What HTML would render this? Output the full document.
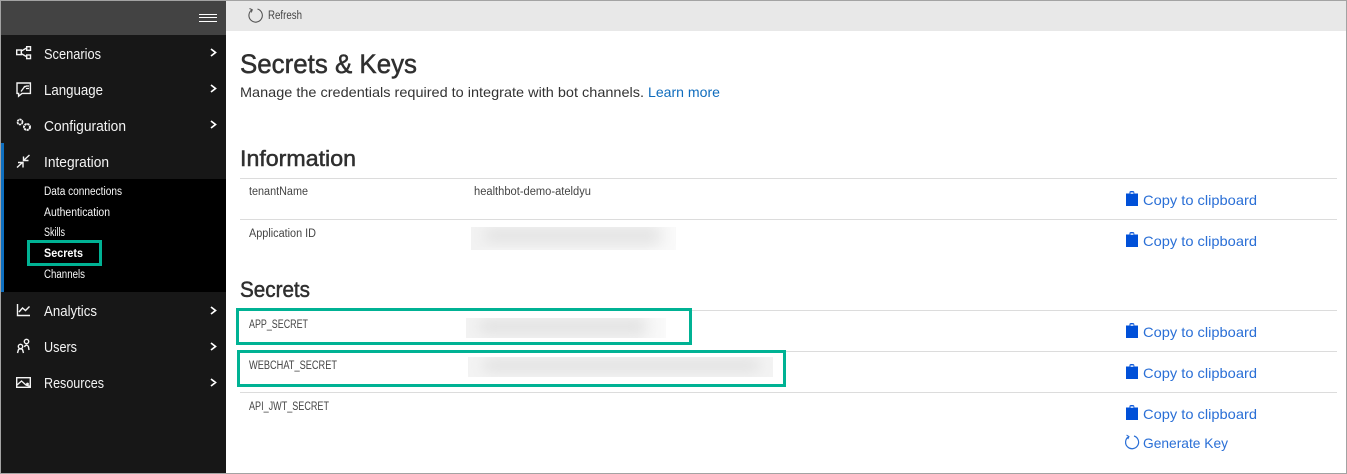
<!DOCTYPE html>
<html><head><meta charset="utf-8"><title>Secrets &amp; Keys</title>
<style>
html,body{margin:0;padding:0;background:#fff;width:1347px;height:474px;overflow:hidden}
svg{display:block}
text{font-family:"Liberation Sans",sans-serif}
.nav{font-size:14.5px;fill:#f4f4f4}
.sub{font-size:11.5px;fill:#f8f8f8}
.lbl{font-size:11.5px;fill:#444}
.lnk{font-size:14px;fill:#2a6fd6}
.h{fill:#2f2f2f;stroke:#2f2f2f;stroke-width:.5}
.ic{fill:none;stroke:#f4f4f4;stroke-width:1.4}
.ch{fill:none;stroke:#fff;stroke-width:1.7}
.ln{stroke:#dcdcdc;stroke-width:1}
.gb{fill:none;stroke:#00b294;stroke-width:3}
</style></head><body>
<svg width="1347" height="474" viewBox="0 0 1347 474" xmlns="http://www.w3.org/2000/svg">
<defs>
<filter id="b" x="-10%" y="-80%" width="120%" height="260%"><feGaussianBlur stdDeviation="7"/></filter>
<clipPath id="c1"><rect x="471" y="227" width="205" height="23"/></clipPath>
<clipPath id="c2"><rect x="466" y="318" width="200" height="20"/></clipPath>
<clipPath id="c3"><rect x="468" y="357" width="305" height="20"/></clipPath>
<linearGradient id="f" x1="0" x2="1" y1="0" y2="0"><stop offset="0" stop-color="#f2f2f2"/><stop offset=".85" stop-color="#f2f2f2"/><stop offset="1" stop-color="#fafafa"/></linearGradient>
<g id="clip"><path d="M0 2.500h3.500V1.200C3.500.4 4.200 0 5.800 0s2.500.4 2.500 1.200v1.300H12V15H0z" fill="#0050d8"/><rect x="4.500" y="1.400" width="3" height="1.400" fill="#fff"/></g>
</defs>
<rect width="1347" height="474" fill="#fff"/>
<rect x="226" y="1" width="1121" height="30" fill="#e8e8e8"/>
<rect x="1" y="1" width="225" height="472" fill="#171717"/>
<rect x="1" y="1" width="225" height="34" fill="#434343"/>
<rect x="1" y="179" width="225" height="113" fill="#000"/>
<rect x="1" y="143" width="3" height="149" fill="#0e6fc0"/>
<path d="M199 14.500h18M199 17.500h18M199 21.500h18" stroke="#fff" stroke-width="1"/>

<text class="nav" x="44" y="59" textLength="57" lengthAdjust="spacingAndGlyphs">Scenarios</text>
<text class="nav" x="44" y="95" textLength="59" lengthAdjust="spacingAndGlyphs">Language</text>
<text class="nav" x="44" y="131" textLength="82" lengthAdjust="spacingAndGlyphs">Configuration</text>
<text class="nav" x="44" y="167" textLength="65" lengthAdjust="spacingAndGlyphs">Integration</text>
<text class="nav" x="44" y="316" textLength="53" lengthAdjust="spacingAndGlyphs">Analytics</text>
<text class="nav" x="44" y="352" textLength="33" lengthAdjust="spacingAndGlyphs">Users</text>
<text class="nav" x="44" y="388" textLength="60" lengthAdjust="spacingAndGlyphs">Resources</text>

<text class="sub" x="44" y="195" textLength="78" lengthAdjust="spacingAndGlyphs">Data connections</text>
<text class="sub" x="44" y="216" textLength="66" lengthAdjust="spacingAndGlyphs">Authentication</text>
<text class="sub" x="44" y="236" textLength="21" lengthAdjust="spacingAndGlyphs">Skills</text>
<text class="sub" x="44" y="257" textLength="39" lengthAdjust="spacingAndGlyphs" font-weight="700" style="fill:#fff">Secrets</text>
<text class="sub" x="44" y="278" textLength="41" lengthAdjust="spacingAndGlyphs">Channels</text>
<rect class="gb" x="28.500" y="241.500" width="72" height="23"/>

<path class="ch" d="M211 49l4.500 3.500-4.500 3.500M211 85l4.500 3.500-4.500 3.500M211 121l4.500 3.500-4.500 3.500M211 307l4.500 3.500-4.500 3.500M211 343l4.500 3.500-4.500 3.500M211 379l4.500 3.500-4.500 3.500"/>

<!-- scenarios -->
<g class="ic"><rect x="16.700" y="50" width="4.600" height="4.600"/><rect x="26.700" y="46.700" width="3.800" height="3.600"/><rect x="26.700" y="55" width="3.800" height="3.600"/><path d="M21.400 51l5.200-3M21.400 53.800l5.200 2.800"/></g>
<!-- language -->
<g class="ic"><path d="M17 83h13.400v10.400H22l-3.400 2.800v-2.800H17z"/><path d="M21 91.500l4-5.500M23.500 87.500l3-1.500M26 86h3M26 88.500h3" stroke-width="1.300"/></g>
<!-- config -->
<g class="ic"><circle cx="20" cy="122" r="2.500" stroke-width="1.700" stroke-dasharray="2.200 .5"/><circle cx="27" cy="127" r="3" stroke-width="2" stroke-dasharray="2.200 .6"/></g>
<!-- integration -->
<g class="ic" stroke-width="1.500"><path d="M29.500 155l-6 5.500M23.500 156.500v4h5M17 167.500l6-5.500M18 162.500h5v5"/></g>
<!-- analytics -->
<g class="ic"><path d="M17.500 304v11.500H30"/><path d="M19 312l3.500-4 3 2.500 4-4"/></g>
<!-- users -->
<g class="ic" stroke-width="1.200"><circle cx="26.500" cy="341.500" r="2.200"/><path d="M24.500 347c.3-1 1.200-1.800 2-1.800s1.800.8 2 1.800l.5 3"/><circle cx="20.500" cy="346.500" r="2.200"/><path d="M17.500 353l1-3.500c.5-.8 3.500-.8 4 0l1 3.500"/></g>
<!-- resources -->
<g class="ic"><rect x="16.700" y="377.700" width="13.600" height="9.600"/><path d="M17 385l4.500-4 4.500 4 4.500 1.500" stroke-width="1.300"/><circle cx="27.500" cy="384" r=".7"/></g>

<!-- toolbar -->
<path d="M252 9.800A6.700 6.700 0 1 0 257.500 9" fill="none" stroke="#555" stroke-width="1.100"/>
<path d="M249.500 8.500l2.800 1.300-1 2.600" fill="none" stroke="#555" stroke-width="1"/>
<text x="268" y="19" font-size="11.500" fill="#444" textLength="34" lengthAdjust="spacingAndGlyphs">Refresh</text>

<text class="h" x="240" y="73" font-size="27" textLength="177" lengthAdjust="spacingAndGlyphs">Secrets &amp; Keys</text>
<text x="240" y="97" font-size="14" fill="#333" textLength="404" lengthAdjust="spacingAndGlyphs">Manage the credentials required to integrate with bot channels.</text>
<text x="648" y="97" font-size="14" fill="#0f6cbd" textLength="72" lengthAdjust="spacingAndGlyphs">Learn more</text>
<text class="h" x="240" y="166" font-size="22" textLength="116" lengthAdjust="spacingAndGlyphs">Information</text>
<text class="h" x="240" y="297" font-size="22" textLength="70" lengthAdjust="spacingAndGlyphs">Secrets</text>

<path class="ln" d="M240 178.500H1337M240 219.500H1337M240 310.500H1337M240 351.500H1337M240 392.500H1337"/>

<text class="lbl" x="249" y="195" textLength="59" lengthAdjust="spacingAndGlyphs">tenantName</text>
<text class="lbl" x="474" y="195" textLength="117" lengthAdjust="spacingAndGlyphs">healthbot-demo-ateldyu</text>
<text class="lbl" x="249" y="237" textLength="67" lengthAdjust="spacingAndGlyphs">Application ID</text>
<text class="lbl" x="249" y="328" textLength="59" lengthAdjust="spacingAndGlyphs">APP_SECRET</text>
<text class="lbl" x="249" y="369" textLength="88" lengthAdjust="spacingAndGlyphs">WEBCHAT_SECRET</text>
<text class="lbl" x="249" y="410" textLength="80" lengthAdjust="spacingAndGlyphs">API_JWT_SECRET</text>

<g clip-path="url(#c1)"><rect x="471" y="227" width="205" height="23" fill="url(#f)"/><rect x="485" y="231" width="175" height="9" fill="#dcdcdc" filter="url(#b)"/></g>
<g clip-path="url(#c2)"><rect x="466" y="318" width="200" height="20" fill="url(#f)"/><rect x="480" y="322" width="165" height="9" fill="#dadada" filter="url(#b)"/></g>
<g clip-path="url(#c3)"><rect x="468" y="357" width="305" height="20" fill="#f3f3f3"/><rect x="484" y="361" width="275" height="9" fill="#dadada" filter="url(#b)"/></g>

<rect class="gb" x="237.500" y="309.500" width="453" height="34"/>
<rect class="gb" x="238.500" y="351.500" width="546" height="34"/>

<use href="#clip" x="1126" y="191"/>
<use href="#clip" x="1126" y="232"/>
<use href="#clip" x="1126" y="323"/>
<use href="#clip" x="1126" y="364"/>
<use href="#clip" x="1126" y="405"/>
<text class="lnk" x="1143" y="205" textLength="114" lengthAdjust="spacingAndGlyphs">Copy to clipboard</text>
<text class="lnk" x="1143" y="246" textLength="114" lengthAdjust="spacingAndGlyphs">Copy to clipboard</text>
<text class="lnk" x="1143" y="337" textLength="114" lengthAdjust="spacingAndGlyphs">Copy to clipboard</text>
<text class="lnk" x="1143" y="378" textLength="114" lengthAdjust="spacingAndGlyphs">Copy to clipboard</text>
<text class="lnk" x="1143" y="419" textLength="114" lengthAdjust="spacingAndGlyphs">Copy to clipboard</text>
<text class="lnk" x="1143" y="448" textLength="85" lengthAdjust="spacingAndGlyphs">Generate Key</text>
<path d="M1128.500 436.800A6.500 6.500 0 1 0 1134 436" fill="none" stroke="#2a6fd6" stroke-width="1.200"/>
<path d="M1126.500 435l2.500 1.600-1.200 2.500" fill="none" stroke="#2a6fd6" stroke-width="1"/>

<rect x=".5" y=".5" width="1346" height="473" fill="none" stroke="#a3a3a3" stroke-width="1"/>
</svg>
</body></html>
